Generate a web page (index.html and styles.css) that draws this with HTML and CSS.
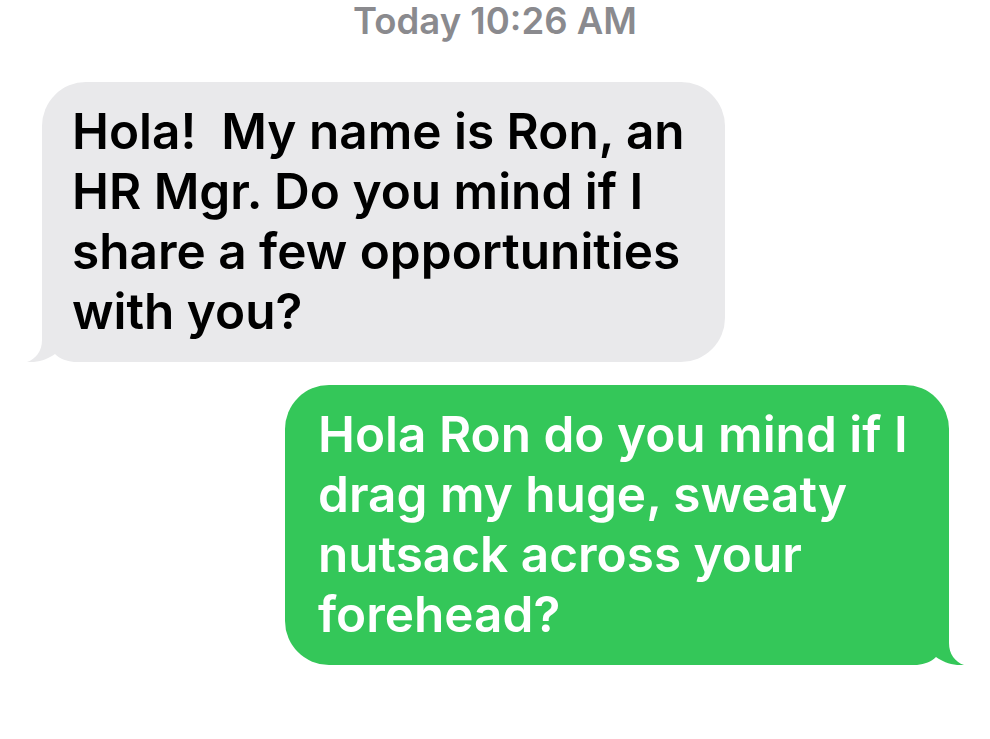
FILE: index.html
```html
<!DOCTYPE html>
<html lang="en">
<head>
<meta charset="utf-8">
<title>Messages</title>
<link rel="stylesheet" href="styles.css">
</head>
<body>
  <main class="thread">
    <div class="stamp">Today 10:26 AM</div>

    <div class="bubble bubble--in">
      <p class="bubble__text">Hola!&nbsp; My name is Ron, an<br>HR Mgr. Do you mind if I<br>share a few opportunities<br>with you?</p>
      <svg class="tail" viewBox="0 0 60 44" aria-hidden="true">
        <path d="M16 0 L16 22 C16 33 10 41 1 44 C12 45 22 41 29 36 C34 41 40 43 48 44 L60 44 L60 0 Z"/>
      </svg>
    </div>

    <div class="bubble bubble--out">
      <p class="bubble__text">Hola Ron do you mind if I<br>drag my huge, sweaty<br>nutsack across your<br>forehead?</p>
      <svg class="tail" viewBox="0 0 60 44" aria-hidden="true">
        <path d="M16 0 L16 22 C16 33 10 41 1 44 C12 45 22 41 29 36 C34 41 40 43 48 44 L60 44 L60 0 Z"/>
      </svg>
    </div>
  </main>
</body>
</html>
```

FILE: styles.css
```css
html, body {
  margin: 0;
  padding: 0;
  background: #ffffff;
}

body {
  width: 990px;
  height: 739px;
  overflow: hidden;
  font-family: "Inter", "Noto Sans", "Liberation Sans", sans-serif;
}

.thread {
  display: flex;
  flex-direction: column;
}

/* timestamp header */
.stamp {
  text-align: center;
  font-size: 36.5px;
  line-height: 42px;
  font-weight: 600;
  color: #8a8a8e;
}

/* message bubbles */
.bubble {
  position: relative;
  box-sizing: border-box;
  border-radius: 44px;
  padding: 19px 30px 21px;
}

.bubble__text {
  position: relative;
  z-index: 1;
  margin: 0;
  font-size: 49.5px;
  line-height: 60px;
  font-weight: 600;
  white-space: nowrap;
}

.bubble--in {
  align-self: flex-start;
  margin-top: 40px;
  margin-left: 42px;
  width: 683px;
  background: #e9e9eb;
  color: #000000;
}

.bubble--out {
  align-self: flex-end;
  margin-top: 23px;
  margin-right: 41px;
  width: 664px;
  padding-left: 33px;
  background: #34c759;
  color: #ffffff;
}

/* the little hook under each bubble, kept behind the text */
.tail {
  position: absolute;
  bottom: 0;
  z-index: 0;
  width: 60px;
  height: 44px;
  display: block;
}

.bubble--in .tail {
  left: -16px;
  fill: #e9e9eb;
}

.bubble--out .tail {
  right: -16px;
  fill: #34c759;
  transform: scaleX(-1);
}
```
